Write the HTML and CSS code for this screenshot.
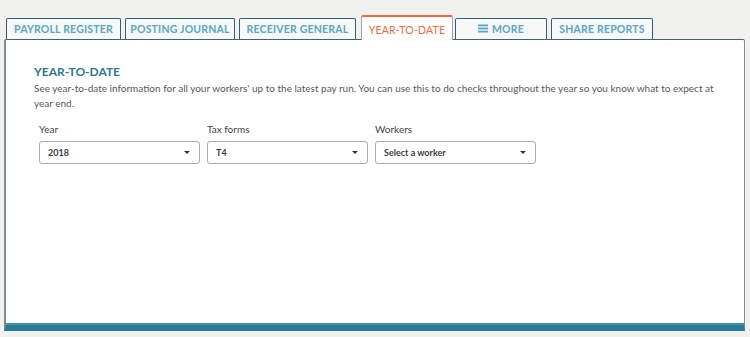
FILE: index.html
```html
<!DOCTYPE html>
<html>
<head>
<meta charset="utf-8">
<link rel="stylesheet" href="styles.css">
</head>
<body>
<div class="page">
  <div class="tabs">
    <div class="tab t1">PAYROLL REGISTER</div>
    <div class="tab t2">POSTING JOURNAL</div>
    <div class="tab t3">RECEIVER GENERAL</div>
    <div class="tab active t4">YEAR-TO-DATE</div>
    <div class="tab t5"><svg class="menu" width="10" height="9" viewBox="0 0 10 9"><rect x="0" y="0.5" width="10" height="1.8" fill="currentColor"/><rect x="0" y="3.6" width="10" height="1.8" fill="currentColor"/><rect x="0" y="6.7" width="10" height="1.8" fill="currentColor"/></svg>MORE</div>
    <div class="tab t6">SHARE REPORTS</div>
  </div>
  <div class="panel">
    <h1 class="title">YEAR-TO-DATE</h1>
    <p class="desc">See year-to-date information for all your workers' up to the latest pay run. You can use this to do checks throughout the year so you know what to expect at year end.</p>
    <div class="fields">
      <div class="field">
        <div class="label">Year</div>
        <div class="select"><span>2018</span><span class="caret"></span></div>
      </div>
      <div class="field">
        <div class="label">Tax forms</div>
        <div class="select"><span>T4</span><span class="caret"></span></div>
      </div>
      <div class="field">
        <div class="label">Workers</div>
        <div class="select"><span>Select a worker</span><span class="caret"></span></div>
      </div>
    </div>
  </div>
</div>
</body>
</html>
```
FILE: styles.css
```css
html, body {
  margin: 0;
  padding: 0;
  background: #f1f1f0;
  font-family: Lato, "Open Sans", sans-serif;
}
.page {
  padding: 15px 5px 0 4px;
  width: 741px;
}
.tabs {
  display: flex;
  align-items: flex-end;
  gap: 4px;
  padding-left: 2px;
  height: 24px;
  position: relative;
  z-index: 2;
}
.tab {
  box-sizing: border-box;
  height: 21px;
  background: #f7f8f8;
  border: 1.5px solid #34606e;
  border-bottom: none;
  border-radius: 2px 2px 0 0;
  color: #5aa6c6;
  font-weight: 700;
  font-size: 10.5px;
  letter-spacing: 0.2px;
  display: flex;
  align-items: center;
  justify-content: center;
  padding-bottom: 1px;
}
.t1 { width: 115px; }
.t2 { width: 110px; }
.t3 { width: 117px; }
.t4 { width: 92px; margin-left: 1px; }
.t5 { width: 92px; margin-left: -2px; }
.t6 { width: 102px; }
.tab.active {
  height: 25px;
  margin-bottom: -1px;
  background: #ffffff;
  border: 1px solid #9aa6aa;
  border-top: 2.5px solid #ee6a45;
  border-bottom: none;
  color: #ee6a45;
  font-weight: 400;
  padding-top: 2px;
  padding-bottom: 0;
}
.menu {
  margin-right: 4px;
}
.panel {
  box-sizing: border-box;
  height: 292px;
  background: #ffffff;
  border: 1px solid #44626c;
  border-left: 2px solid #7f8c90;
  border-right: 1.5px solid #7f8c90;
  border-bottom: 6px solid #2a7b93;
  box-shadow: inset 0 -2px 0 #3f93aa;
  border-radius: 2px 2px 0 0;
  padding: 24px 30px 0 28px;
}
.title {
  margin: 0;
  font-size: 12px;
  font-weight: 700;
  color: #2d7796;
  line-height: 16px;
}
.desc {
  margin: 1px 0 0 0;
  font-size: 10px;
  line-height: 15px;
  color: #55595c;
  width: 680px;
}
.fields {
  display: flex;
  gap: 7px;
  margin-top: 12px;
  padding-left: 5px;
}
.field {
  width: 161px;
}
.label {
  font-size: 10px;
  color: #3f4346;
  line-height: 12px;
  margin-bottom: 6px;
}
.select {
  box-sizing: border-box;
  height: 23px;
  border: 1px solid #a9adaf;
  border-radius: 3px;
  display: flex;
  align-items: center;
  justify-content: space-between;
  padding: 0 9px 0 8px;
  font-size: 9px;
  font-weight: 700;
  color: #3a3d40;
}
.caret {
  width: 0;
  height: 0;
  border-left: 3px solid transparent;
  border-right: 3px solid transparent;
  border-top: 3.5px solid #333;
}
```
